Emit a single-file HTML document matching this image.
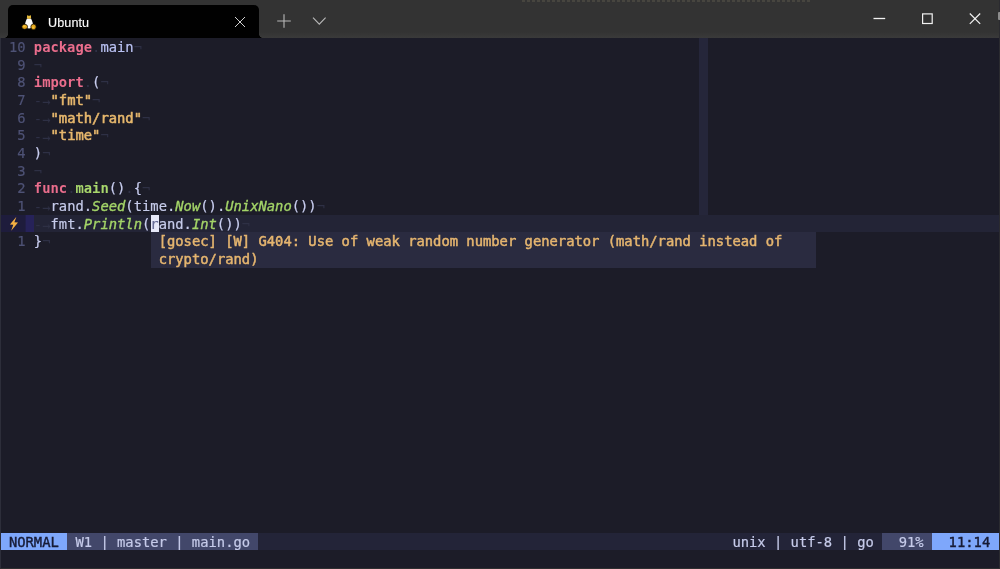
<!DOCTYPE html>
<html lang="en">
<head>
<meta charset="utf-8">
<title>Ubuntu</title>
<style>
  html, body { margin: 0; padding: 0; }
  body {
    width: 1000px; height: 569px; overflow: hidden; position: relative;
    background: #1c1c28;
    font-family: "Liberation Sans", sans-serif;
  }
  .abs { position: absolute; }
  /* ---------- window chrome ---------- */
  .titlebar { left: 0; top: 0; width: 1000px; height: 37.6px; background: #333333; }
  .tab { left: 8px; top: 4.8px; width: 251px; height: 33px; background: #010101; border-radius: 5px 5px 0 0; }
  .tabtitle { left: 48px; top: 15px; height: 16px; line-height: 16px; font-size: 12.6px; color: #fafafa; letter-spacing: 0.1px; will-change: transform; -webkit-text-stroke: 0.15px; }
  .edgeL { left: 0; top: 37.6px; width: 1.2px; height: 532px; background: #2d2e3a; }
  .edgeR { left: 998.6px; top: 0; width: 1.4px; height: 569px; background: #2b2b30; }
  .edgeB { left: 0; top: 567.5px; width: 1000px; height: 1.5px; background: #2f2f31; }
  /* ---------- terminal grid ---------- */
  .term {
    left: 0; top: 37.8px; width: 1000px; height: 531px;
    font-family: "DejaVu Sans Mono", "Liberation Mono", monospace;
    font-size: 13.82px; color: #c6cbea; will-change: transform; -webkit-text-stroke: 0.2px;
  }
  .row { position: absolute; left: 0.6px; height: 17.68px; line-height: 19.4px; white-space: pre; }
  .r0 { top: 0.00px; }
  .r1 { top: 17.68px; }
  .r2 { top: 35.36px; }
  .r3 { top: 53.04px; }
  .r4 { top: 70.72px; }
  .r5 { top: 88.40px; }
  .r6 { top: 106.08px; }
  .r7 { top: 123.76px; }
  .r8 { top: 141.44px; }
  .r9 { top: 159.12px; }
  .r10 { top: 176.80px; }
  .r11 { top: 194.48px; }
  .r12 { top: 212.16px; }
  .r28 { top: 495.04px; }
  .ln { color: #4e5275; }
  .kw { color: #ea6d8c; font-weight: bold; -webkit-text-stroke: 0; }
  .pk { color: #b9c1f2; }
  .st { color: #e7b86d; -webkit-text-stroke: 0.55px #e7b86d; }
  .fn { color: #a3d468; font-style: italic; -webkit-text-stroke: 0.35px #a3d468; }
  .fm { color: #a8d76c; font-weight: bold; -webkit-text-stroke: 0; }
  .pn { color: #c9cef0; }
  .ws { color: #2e3045; -webkit-text-stroke: 0; }
  .sp { color: #2f3146; -webkit-text-stroke: 0; }
  .tb { position: relative; top: 1.2px; }
  .colcol { left: 699.3px; top: 0; width: 8.6px; height: 176.8px; background: #25263a; }
  .cline { left: 0; top: 176.8px; width: 999px; height: 17.68px; background: #232436; }
  .clnr { left: 0; top: 176.8px; width: 33.9px; height: 17.68px; background: linear-gradient(90deg, #1e1c3c 0, #1e1c3c 25.2px, #262259 26px, #262259 100%); }
  .cursor { left: 150.9px; top: 176.8px; width: 8.4px; height: 17.68px; background: #e6e8f8; }
  .popup { left: 150.9px; top: 194.48px; width: 665.2px; height: 35.36px; background: #2a2b40; }
  .dg { color: #e5b56f; -webkit-text-stroke: 0.5px #e5b56f; }
  .sa { background: #7ea7fb; color: #171b36; -webkit-text-stroke: 0.4px #171b36; }
  .sb { background: #42476a; color: #c6cbea; }
  .sc { background: #232438; color: #c6cbea; }
  .seg { display: inline-block; height: 17px; vertical-align: top; overflow: hidden; }
</style>
</head>
<body>

<!-- title bar -->
<div class="abs titlebar"></div>
<div class="abs" style="left:0;top:32px;width:1000px;height:5.6px;background:linear-gradient(#333333,#3a3a3a)"></div>
<div class="abs tab"></div>
<div class="abs" style="left:259px;top:33.6px;width:4px;height:4px;background:radial-gradient(circle at 100% 0, rgba(1,1,1,0) 3.6px, #010101 4.2px)"></div>
<div class="abs" style="left:4px;top:33.6px;width:4px;height:4px;background:radial-gradient(circle at 0 0, rgba(1,1,1,0) 3.6px, #010101 4.2px)"></div>
<div class="abs" style="left:522px;top:0;width:290px;height:1.6px;opacity:0.13;background:repeating-linear-gradient(90deg,#c9bd8e 0,#c9bd8e 3px,rgba(0,0,0,0) 3px,rgba(0,0,0,0) 5px)"></div>
<div class="abs tabtitle">Ubuntu</div>


<!-- tux icon -->
<svg class="abs" style="left:14px;top:8px" width="30" height="28" viewBox="14 8 30 28">
  <path d="M27 18.4 L31 18.4 C32.4 21 33.1 23.4 32.9 25.4 C32.6 27.6 30.8 28.4 29 28.4 C27.2 28.4 25.4 27.6 25.1 25.4 C24.9 23.4 25.6 21 27 18.4 Z" fill="#fbfbfb"/>
  <path d="M27.1 15 L28.3 15.9 L29 15.2 L29.7 15.9 L30.9 15 L31.1 18.3 L29 19 L26.9 18.3 Z" fill="#e3b838"/>
  <ellipse cx="24.7" cy="26.8" rx="2.9" ry="2.5" fill="#e4a61c" stroke="#010101" stroke-width="0.7"/>
  <ellipse cx="33.5" cy="26.9" rx="2.7" ry="2.8" fill="#e4a61c" stroke="#010101" stroke-width="0.7"/>
  <ellipse cx="24.3" cy="26.2" rx="1.2" ry="0.9" fill="#f4c43a"/>
  <ellipse cx="33.1" cy="27.4" rx="1.1" ry="0.9" fill="#f4c43a"/>
</svg>
<!-- tab close -->
<svg class="abs" style="left:233px;top:14.9px" width="14" height="14" viewBox="0 0 14 14">
  <path d="M2 2 L12 12 M12 2 L2 12" stroke="#d0d0d0" stroke-width="1" fill="none"/>
</svg>
<!-- new tab plus -->
<svg class="abs" style="left:276px;top:13.3px" width="16" height="16" viewBox="0 0 16 16">
  <path d="M8 1.2 L8 14.8 M1.2 8 L14.8 8" stroke="#b8b8b8" stroke-width="1.1" fill="none"/>
</svg>
<!-- dropdown chevron -->
<svg class="abs" style="left:311px;top:13px" width="16" height="16" viewBox="0 0 16 16">
  <path d="M2 4.6 L8.3 11.2 L14.6 4.6" stroke="#b8b8b8" stroke-width="1.1" fill="none"/>
</svg>
<!-- window controls -->
<svg class="abs" style="left:860px;top:0" width="140" height="38" viewBox="0 0 140 38">
  <path d="M13.5 18.5 L25.2 18.5" stroke="#f2f2f2" stroke-width="1.3" fill="none"/>
  <rect x="62.6" y="13.9" width="9.6" height="9.6" stroke="#f2f2f2" stroke-width="1.2" fill="none"/>
  <path d="M109.8 13.5 L120.2 23.9 M120.2 13.5 L109.8 23.9" stroke="#f2f2f2" stroke-width="1.2" fill="none"/>
</svg>

<!-- terminal -->
<div class="abs term">
  <div class="abs colcol"></div>
  <div class="abs cline"></div>
  <div class="abs clnr"></div>
  <div class="abs cursor"></div>
  <div class="abs popup"></div>

  <svg class="abs" style="left:9.2px;top:178.2px" width="10" height="16" viewBox="0 0 10 16">
    <path d="M7.4 0.8 L0.9 8.4 L4.3 8.7 L2.2 14.8 L9 6.6 L5.4 6.2 Z" fill="#f5b042"/>
  </svg>
  <div class="row r0"><span class="ln"> 10 </span><span class="kw">package</span><span class="sp">.</span><span class="pk">main</span><span class="ws">¬</span></div>
  <div class="row r1"><span class="ln">  9 </span><span class="ws">¬</span></div>
  <div class="row r2"><span class="ln">  8 </span><span class="kw">import</span><span class="sp">.</span><span class="pn">(</span><span class="ws">¬</span></div>
  <div class="row r3"><span class="ln">  7 </span><span class="ws tb">-→</span><span class="st">"fmt"</span><span class="ws">¬</span></div>
  <div class="row r4"><span class="ln">  6 </span><span class="ws tb">-→</span><span class="st">"math/rand"</span><span class="ws">¬</span></div>
  <div class="row r5"><span class="ln">  5 </span><span class="ws tb">-→</span><span class="st">"time"</span><span class="ws">¬</span></div>
  <div class="row r6"><span class="ln">  4 </span><span class="pn">)</span><span class="ws">¬</span></div>
  <div class="row r7"><span class="ln">  3 </span><span class="ws">¬</span></div>
  <div class="row r8"><span class="ln">  2 </span><span class="kw">func</span><span class="sp">.</span><span class="fm">main</span><span class="pn">()</span><span class="sp">.</span><span class="pn">{</span><span class="ws">¬</span></div>
  <div class="row r9"><span class="ln">  1 </span><span class="ws tb">-→</span>rand.<span class="fn">Seed</span><span class="pn">(</span>time.<span class="fn">Now</span><span class="pn">()</span>.<span class="fn">UnixNano</span><span class="pn">())</span><span class="ws">¬</span></div>
  <div class="row r10"><span class="ln">    </span><span class="ws tb">-→</span>fmt.<span class="fn">Println</span><span class="pn">(</span><span style="color:#666b96">r</span>and.<span class="fn">Int</span><span class="pn">())</span><span class="ws">¬</span></div>
  <div class="row r11"><span class="ln">  1 </span><span class="pn">}</span><span class="ws">¬</span></div>

  <div class="row r11" style="left:158.68px"><span class="dg">[gosec] [W] G404: Use of weak random number generator (math/rand instead of</span></div>
  <div class="row r12" style="left:158.68px"><span class="dg">crypto/rand)</span></div>

  <div class="row r28"><span class="seg sa"> NORMAL </span><span class="seg sb"> W1 | master | main.go </span><span class="seg sc">                                                         unix | utf-8 | go </span><span class="seg sb">  91% </span><span class="seg sa">  11:14 </span></div>
</div>

<div class="abs edgeL"></div>
<div class="abs edgeR"></div>
<div class="abs edgeB"></div>
<div class="abs" style="left:998.4px;top:12px;width:1.6px;height:8px;background:#8c8c8c;border-radius:1px 0 0 1px"></div>

</body>
</html>
